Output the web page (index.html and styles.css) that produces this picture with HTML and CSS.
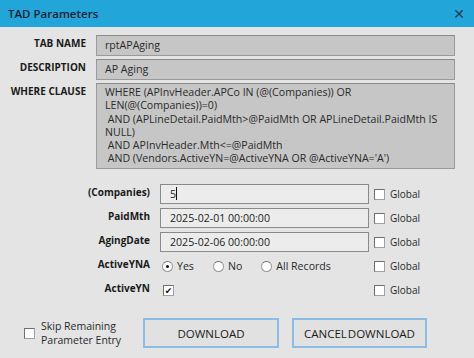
FILE: index.html
```html
<!DOCTYPE html>
<html lang="en">
  <head>
    <meta charset="UTF-8" />
    <meta name="viewport" content="width=device-width, initial-scale=1.0" />
    <title>TAD Parameters</title>
    <link rel="stylesheet" href="styles.css">
  </head>
  <body>
    <div class="window">
      <div class="titlebar">
        <span class="title">TAD Parameters</span>
        <span class="close">&#x2715;</span>
      </div>

      <div class="info">
        <label class="info-label">TAB NAME</label>
        <div class="info-box">rptAPAging</div>
        <label class="info-label">DESCRIPTION</label>
        <div class="info-box">AP Aging</div>
        <label class="info-label">WHERE CLAUSE</label>
        <div class="info-box where">WHERE (APInvHeader.APCo IN (@(Companies)) OR
LEN(@(Companies))=0)
 AND (APLineDetail.PaidMth&gt;@PaidMth OR APLineDetail.PaidMth IS
NULL)
 AND APInvHeader.Mth&lt;=@PaidMth
 AND (Vendors.ActiveYN=@ActiveYNA OR @ActiveYNA='A')</div>
      </div>

      <div class="params">
        <label class="param-label">(Companies)</label>
        <div class="param-input">5<span class="caret"></span></div>
        <label class="global"><span class="check"></span>Global</label>

        <label class="param-label">PaidMth</label>
        <div class="param-input">2025-02-01 00:00:00</div>
        <label class="global"><span class="check"></span>Global</label>

        <label class="param-label">AgingDate</label>
        <div class="param-input">2025-02-06 00:00:00</div>
        <label class="global"><span class="check"></span>Global</label>

        <label class="param-label">ActiveYNA</label>
        <div class="radios">
          <span class="radio-item"><span class="radio on"></span>Yes</span>
          <span class="radio-item"><span class="radio"></span>No</span>
          <span class="radio-item"><span class="radio"></span>All Records</span>
        </div>
        <label class="global"><span class="check"></span>Global</label>

        <label class="param-label">ActiveYN</label>
        <div class="yn"><span class="check checked">&#x2714;</span></div>
        <label class="global"><span class="check"></span>Global</label>
      </div>

      <div class="footer">
        <label class="skip">
          <span class="check"></span>
          <span>Skip Remaining<br>Parameter Entry</span>
        </label>
        <button class="btn download">DOWNLOAD</button>
        <button class="btn cancel">CANCEL DOWNLOAD</button>
      </div>
    </div>
  </body>
</html>
```

FILE: styles.css
```css
body {
  margin: 0;
  background-color: #e4e4e4;
  font-family: "Open Sans", "DejaVu Sans", sans-serif;
  color: #1a1a1a;
}

.window {
  width: 474px;
  height: 358px;
  overflow: hidden;
}

.titlebar {
  height: 27px;
  background-color: #22a6d9;
  display: flex;
  align-items: center;
  justify-content: space-between;
  padding: 0 9px 0 8px;
}

.title {
  font-size: 11.5px;
  font-weight: 600;
  color: #10202c;
}

.close {
  font-size: 14px;
  color: #1a3a50;
}

.info {
  display: grid;
  grid-template-columns: 86px 359px;
  column-gap: 10px;
  row-gap: 3px;
  margin-top: 8px;
}

.info-label {
  text-align: right;
  font-size: 10px;
  font-weight: 700;
  line-height: 16px;
  white-space: nowrap;
}

.info-box {
  height: 21px;
  box-sizing: border-box;
  background-color: #c6c6c6;
  border: 1px solid #9a9a9a;
  border-top-color: #8a8a8a;
  font-size: 10.6px;
  line-height: 19px;
  padding-left: 8px;
  color: #2a2a2a;
}

.info-box.where {
  height: 86px;
  line-height: 13.3px;
  padding-top: 2px;
  white-space: pre;
}

.params {
  display: grid;
  grid-template-columns: 150px 209px auto;
  column-gap: 10px;
  row-gap: 4px;
  grid-auto-rows: 20px;
  margin-top: 15px;
  align-items: center;
}

.param-label {
  text-align: right;
  font-size: 10px;
  font-weight: 700;
  padding-bottom: 4px;
}

.param-input {
  height: 20px;
  box-sizing: border-box;
  background-color: #ececec;
  border: 1px solid #8a8a8a;
  font-size: 10.6px;
  line-height: 18px;
  padding-left: 9px;
  color: #222;
}

.caret {
  display: inline-block;
  width: 1px;
  height: 13px;
  background-color: #111;
  vertical-align: -2px;
}

.global {
  display: flex;
  align-items: center;
  gap: 5px;
  font-size: 10px;
  margin-left: -5px;
  color: #2a2a2a;
}

.check {
  width: 11px;
  height: 11px;
  box-sizing: border-box;
  background-color: #fff;
  border: 1px solid #a0a0a0;
  border-top-color: #707070;
  border-left-color: #707070;
  display: inline-flex;
  align-items: center;
  justify-content: center;
  flex-shrink: 0;
}

.check.checked {
  font-size: 9px;
  line-height: 9px;
  color: #111;
}

.radios {
  display: flex;
  align-items: center;
  font-size: 10.6px;
  color: #2a2a2a;
  margin-left: 2px;
}

.radio-item {
  display: flex;
  align-items: center;
  gap: 4px;
  margin-right: 19px;
}

.radio {
  width: 11px;
  height: 11px;
  box-sizing: border-box;
  border-radius: 50%;
  background-color: #fff;
  border: 1px solid #9a9a9a;
  border-top-color: #707070;
  position: relative;
}

.radio.on::after {
  content: "";
  position: absolute;
  left: 3px;
  top: 3px;
  width: 3px;
  height: 3px;
  border-radius: 50%;
  background-color: #111;
}

.yn {
  display: flex;
  align-items: center;
  padding-left: 3px;
}

.footer {
  display: flex;
  align-items: center;
  margin-top: 18px;
  padding-left: 24px;
}

.skip {
  display: flex;
  align-items: center;
  gap: 6px;
  font-size: 10.5px;
  line-height: 14px;
  color: #2a2a2a;
  width: 119px;
}

.btn {
  height: 30px;
  background-color: #e1e1e1;
  border: 2px solid #8cbbe6;
  font-family: "Open Sans", "DejaVu Sans", sans-serif;
  font-size: 11.5px;
  color: #1a1a1a;
  padding: 0;
}

.download {
  width: 136px;
}

.cancel {
  width: 135px;
  margin-left: 13px;
  word-spacing: -2px;
}
```
